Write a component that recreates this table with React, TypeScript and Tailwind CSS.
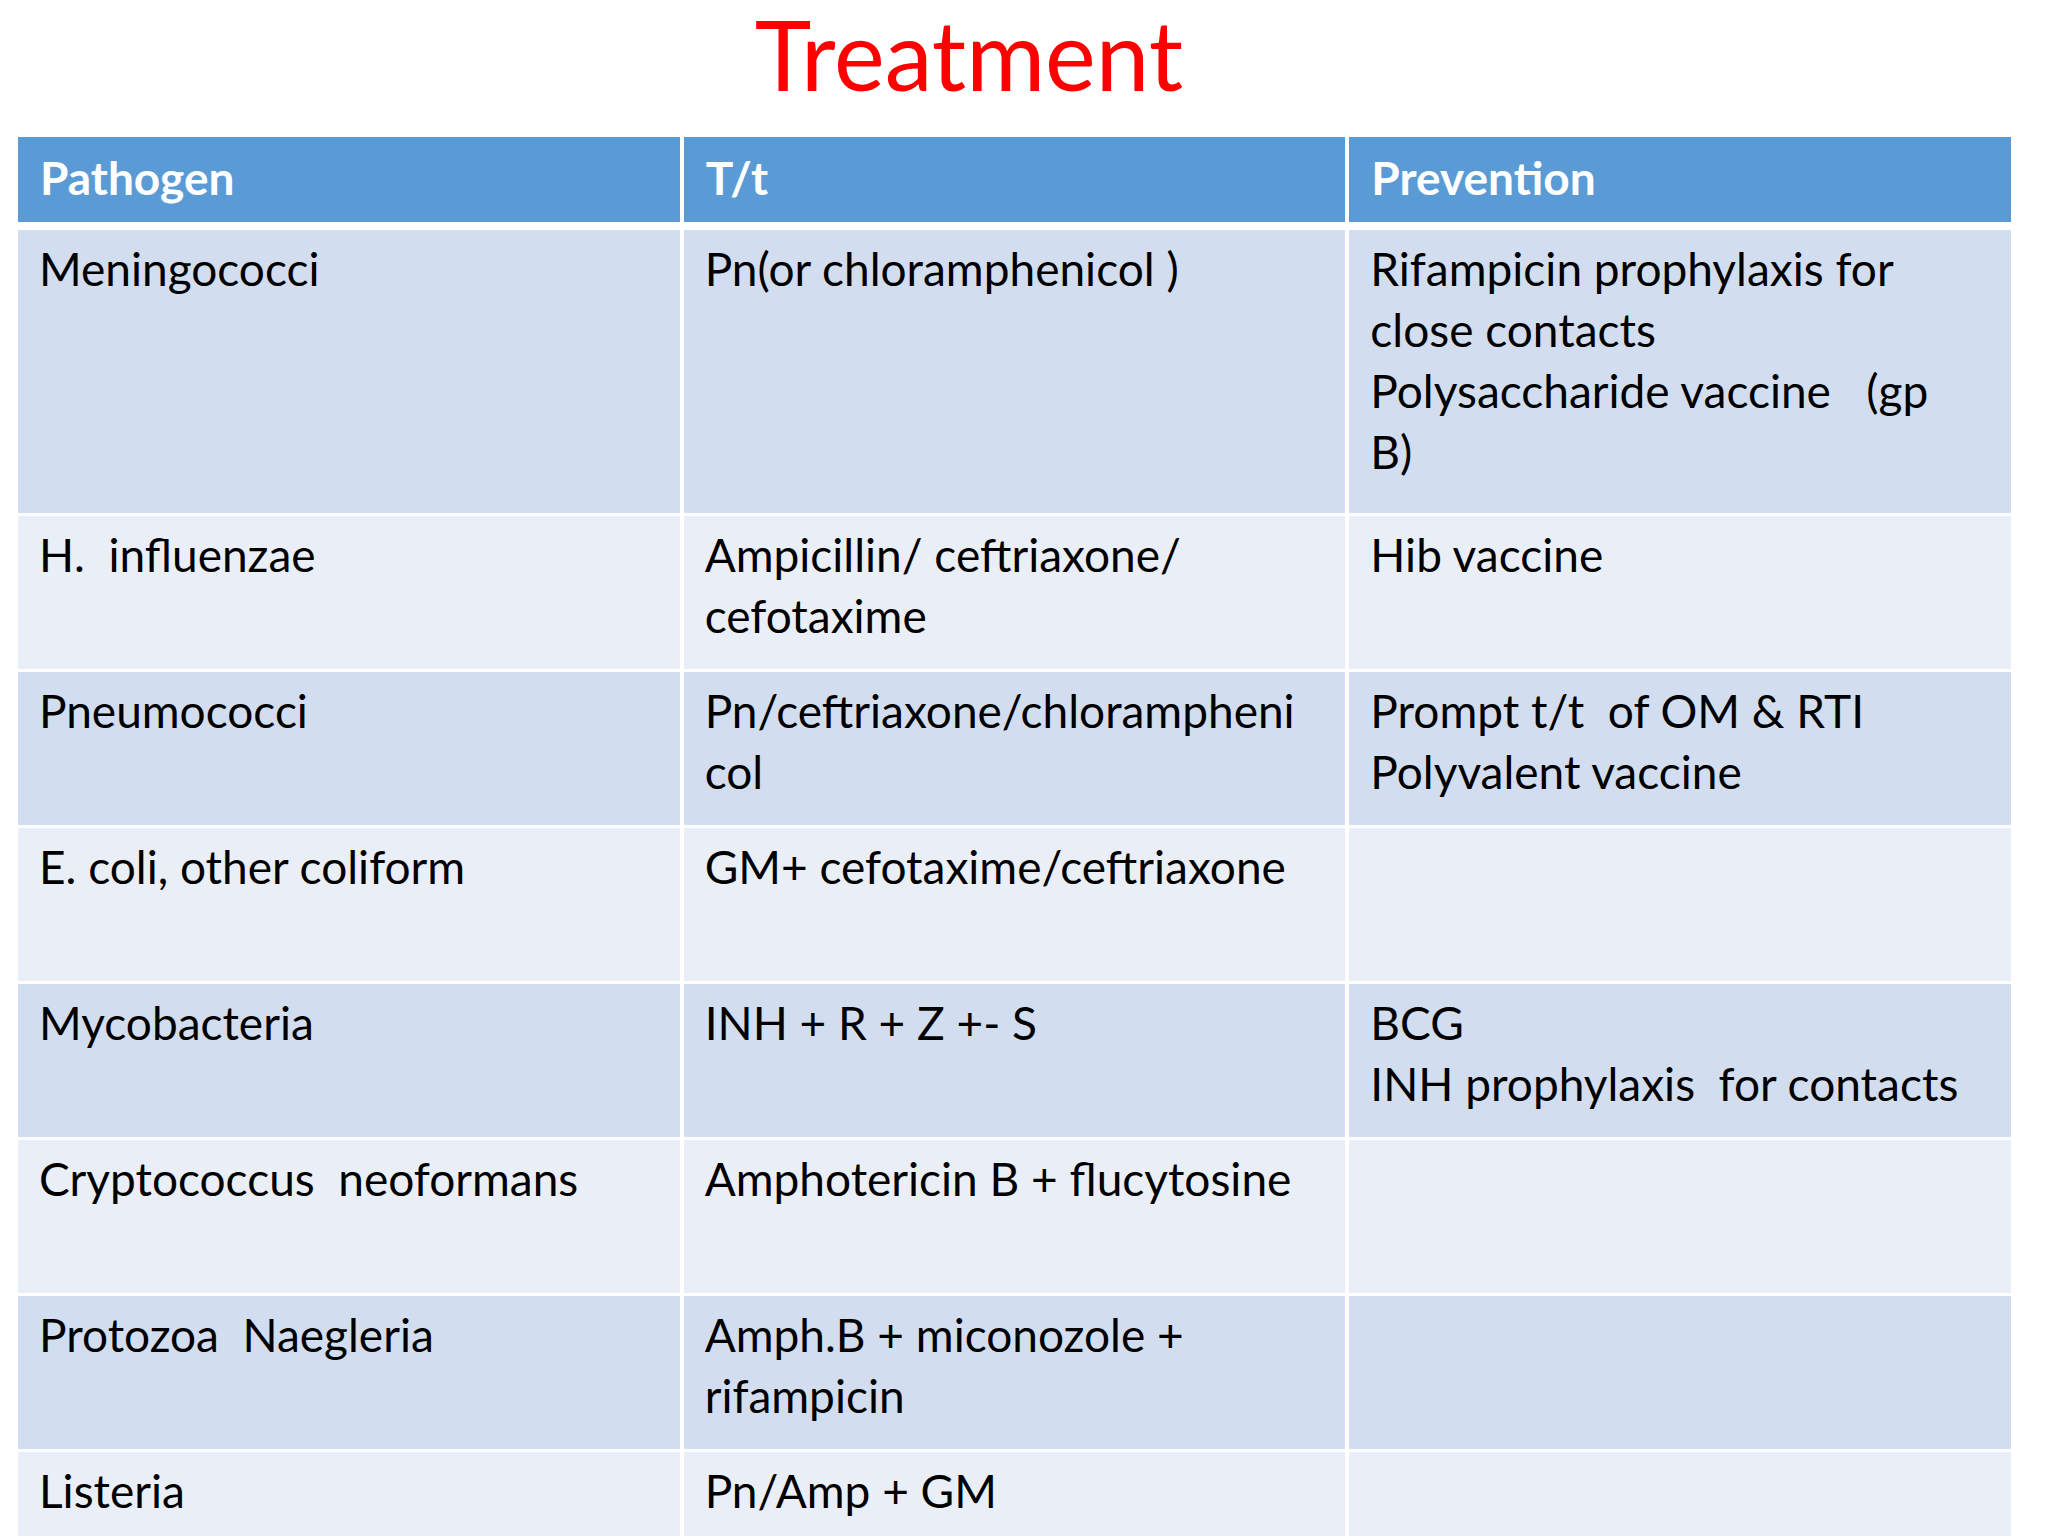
import React from "react";

type Row = {
  pathogen: string[];
  tt: string[];
  prevention: string[];
  tall?: boolean;
};

const rows: Row[] = [
  {
    pathogen: ["Meningococci"],
    tt: ["Pn(or chloramphenicol )"],
    prevention: [
      "Rifampicin prophylaxis for",
      "close contacts",
      "Polysaccharide vaccine   (gp",
      "B)",
    ],
    tall: true,
  },
  {
    pathogen: ["H.  influenzae"],
    tt: ["Ampicillin/ ceftriaxone/", "cefotaxime"],
    prevention: ["Hib vaccine"],
  },
  {
    pathogen: ["Pneumococci"],
    tt: ["Pn/ceftriaxone/chlorampheni", "col"],
    prevention: ["Prompt t/t  of OM & RTI", "Polyvalent vaccine"],
  },
  {
    pathogen: ["E. coli, other coliform"],
    tt: ["GM+ cefotaxime/ceftriaxone"],
    prevention: [],
  },
  {
    pathogen: ["Mycobacteria"],
    tt: ["INH + R + Z +- S"],
    prevention: ["BCG", "INH prophylaxis  for contacts"],
  },
  {
    pathogen: ["Cryptococcus  neoformans"],
    tt: ["Amphotericin B + flucytosine"],
    prevention: [],
  },
  {
    pathogen: ["Protozoa  Naegleria"],
    tt: ["Amph.B + miconozole +", "rifampicin"],
    prevention: [],
  },
  {
    pathogen: ["Listeria"],
    tt: ["Pn/Amp + GM"],
    prevention: [],
  },
];

function Cell({ lines, band, tall }: { lines: string[]; band: boolean; tall?: boolean }) {
  return (
    <div
      className={`${band ? "bg-[#d2deef]" : "bg-[#eaeff7]"} ${
        tall ? "h-[283px]" : "h-[153px]"
      } pl-[21px] pt-[8px] text-[46px] leading-[61px] text-black whitespace-pre`}
    >
      {lines.map((line, i) => (
        <div key={i}>{line}</div>
      ))}
    </div>
  );
}

export default function App() {
  return (
    <div className="w-[2048px] h-[1536px] overflow-hidden bg-white font-['Lato',sans-serif]">
      <h1 className="pt-[4px] pr-[110px] text-center text-[96px] leading-[100px] font-normal text-[#ff0000]">
        Treatment
      </h1>

      <div className="ml-[18px] mt-[33px] w-[1993px] bg-white">
        {/* header */}
        <div className="grid grid-cols-3 gap-x-[4px]">
          {["Pathogen", "T/t", "Prevention"].map((h) => (
            <div
              key={h}
              className="h-[85px] bg-[#5b9bd5] pl-[22px] pt-[10px] text-[46px] leading-[61px] font-bold text-white"
            >
              {h}
            </div>
          ))}
        </div>

        {/* body */}
        <div className="mt-[8px] grid grid-cols-3 gap-x-[4px] gap-y-[3px]">
          {rows.map((row, idx) => (
            <React.Fragment key={idx}>
              <Cell lines={row.pathogen} band={idx % 2 === 0} tall={row.tall} />
              <Cell lines={row.tt} band={idx % 2 === 0} tall={row.tall} />
              <Cell lines={row.prevention} band={idx % 2 === 0} tall={row.tall} />
            </React.Fragment>
          ))}
        </div>
      </div>
    </div>
  );
}
